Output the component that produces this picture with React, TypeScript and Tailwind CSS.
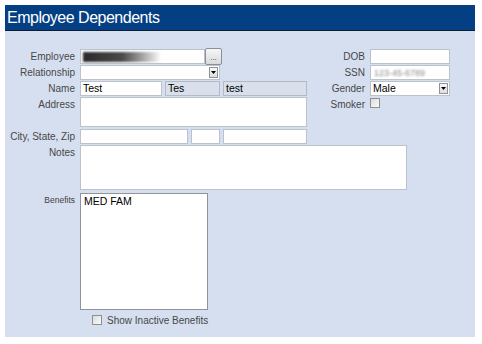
import React from 'react';

const inputCls = 'h-[15px] bg-white border border-[#bcc2cc] text-[10.5px] leading-[13px] text-black pl-[2px] overflow-hidden whitespace-nowrap';
const disabledCls = 'h-[15px] bg-[#d9e0eb] border border-[#b3bac5] text-[10.5px] leading-[13px] text-black pl-[2px] overflow-hidden whitespace-nowrap';

function DropArrow() {
    return (
        <div className="w-[9px] h-[11px] border border-[#8e939b] bg-linear-to-b from-[#f7f7f7] to-[#dedede] flex items-center justify-center">
            <svg width="5" height="3" viewBox="0 0 5 3"><path d="M0 0h5L2.5 3z" fill="#000" /></svg>
        </div>
    );
}

function Checkbox() {
    return <div className="w-[10px] h-[10px] border border-[#8d8f93] bg-linear-to-br from-[#dcdcdc] to-[#fafafa]" />;
}

function Label({ children, w }: { children: React.ReactNode; w: string }) {
    return <div className={`${w} shrink-0 text-right text-[10px] leading-[15px] text-[#474747] pr-[5px]`}>{children}</div>;
}

export default function App() {
    return (
        <div className="w-[482px] h-[344px] bg-white p-[5px] font-['Liberation_Sans',Arial,sans-serif]">
            <div className="w-[470px] h-[332px] flex flex-col">
                <div className="h-[26px] shrink-0 bg-[#053f83] border-b border-[#0d1c33] pl-[2px] text-white text-[16px] tracking-[-0.5px] leading-[25px]">
                    Employee Dependents
                </div>
                <div className="flex-1 bg-[#d6dff0] pt-[18px] flex flex-col">
                    <div className="flex">
                        {/* left column */}
                        <div className="w-[302px] shrink-0 flex flex-col">
                            <div className="flex h-[16px]">
                                <Label w="w-[75px]">Employee</Label>
                                <div className={`${inputCls} w-[125px] flex items-center`}>
                                    <div className="w-[78px] h-[10px] bg-linear-to-r from-[#2a2a2a] via-[#4a4a4a] to-white blur-[1px]" />
                                </div>
                                <div className="w-[17px] h-[17px] -mt-px rounded-[2px] border border-[#8a8f98] bg-linear-to-b from-[#f6f6f6] to-[#d9dadc] text-[8px] leading-[17px] text-center text-[#333]">
                                    ...
                                </div>
                            </div>
                            <div className="flex h-[16px]">
                                <Label w="w-[75px]">Relationship</Label>
                                <div className={`${inputCls} w-[140px] flex justify-end items-center pr-px`}>
                                    <DropArrow />
                                </div>
                            </div>
                            <div className="flex h-[16px]">
                                <Label w="w-[75px]">Name</Label>
                                <div className={`${inputCls} w-[82px]`}>Test</div>
                                <div className={`${disabledCls} w-[55px] ml-[3px]`}>Tes</div>
                                <div className={`${disabledCls} w-[84px] ml-[3px]`}>test</div>
                            </div>
                            <div className="flex h-[32px]">
                                <Label w="w-[75px]">Address</Label>
                                <div className="w-[227px] h-[30px] bg-white border border-[#bcc2cc]" />
                            </div>
                            <div className="flex h-[16px]">
                                <Label w="w-[75px]">City, State, Zip</Label>
                                <div className={`${inputCls} w-[108px]`} />
                                <div className={`${inputCls} w-[29px] ml-[3px]`} />
                                <div className={`${inputCls} w-[84px] ml-[3px]`} />
                            </div>
                        </div>
                        {/* right column */}
                        <div className="flex flex-col">
                            <div className="flex h-[16px]">
                                <Label w="w-[63px]">DOB</Label>
                                <div className={`${inputCls} w-[80px]`} />
                            </div>
                            <div className="flex h-[16px]">
                                <Label w="w-[63px]">SSN</Label>
                                <div className={`${inputCls} w-[80px] pl-[3px]`}>
                                    <span className="text-[9px] text-[#8a8a8a] blur-[0.8px]">123-45-6789</span>
                                </div>
                            </div>
                            <div className="flex h-[16px]">
                                <Label w="w-[63px]">Gender</Label>
                                <div className={`${inputCls} w-[80px] flex justify-between items-center pr-px`}>
                                    <span>Male</span>
                                    <DropArrow />
                                </div>
                            </div>
                            <div className="flex h-[16px] items-start">
                                <Label w="w-[63px]">Smoker</Label>
                                <div className="mt-[1px]"><Checkbox /></div>
                            </div>
                        </div>
                    </div>
                    <div className="flex">
                        <Label w="w-[75px]">Notes</Label>
                        <div className="w-[327px] h-[45px] bg-white border border-[#bcc2cc]" />
                    </div>
                    <div className="flex mt-[3px]">
                        <div className="w-[75px] shrink-0 text-right text-[8.5px] leading-[13px] pt-[1px] text-[#3f3f3f] pr-[5px]">Benefits</div>
                        <div className="w-[128px] h-[117px] bg-white border border-[#8f949c] pl-[3px] text-[10.5px] leading-[14px] text-black">
                            MED FAM
                        </div>
                    </div>
                    <div className="flex items-center mt-[4px] pl-[87px] h-[12px]">
                        <Checkbox />
                        <span className="ml-[5px] text-[10px] text-[#474747]">Show Inactive Benefits</span>
                    </div>
                </div>
            </div>
        </div>
    );
}
